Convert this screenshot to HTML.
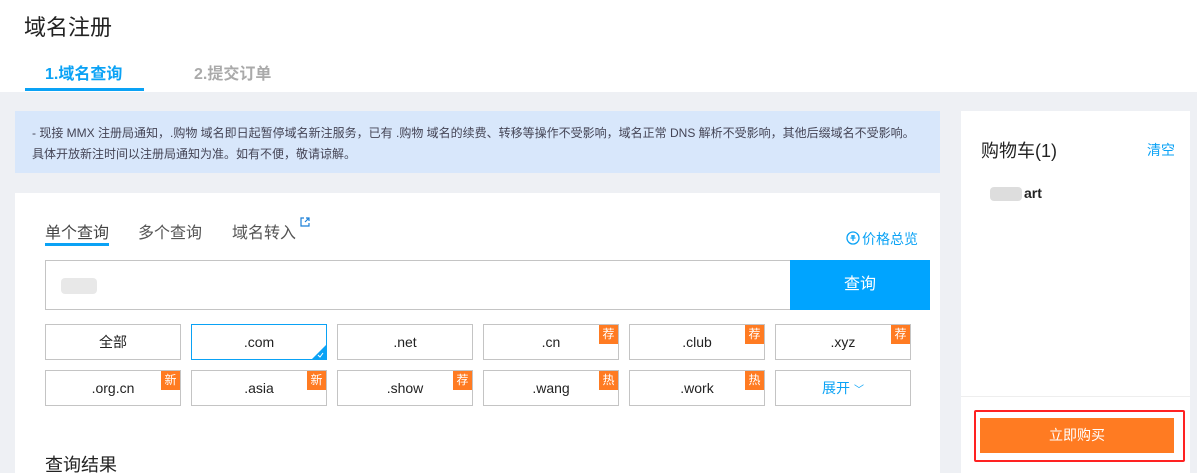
<!DOCTYPE html>
<html><head><meta charset="utf-8"><style>
*{margin:0;padding:0;box-sizing:border-box}
html,body{width:1197px;height:473px;overflow:hidden}
body{background:#eef0f4;font-family:"Liberation Sans","Noto Sans CJK SC",sans-serif;position:relative;color:#333}
.a{position:absolute}
.hd{left:0;top:0;width:1197px;height:92px;background:#fff}
.tag{position:absolute;right:0;top:0;width:19px;height:19px;background:#ff7b22;color:#fff;font-size:12px;line-height:19px;text-align:center}
.b{position:absolute;width:136px;height:36px;border:1px solid #c4c4c4;background:#fff;font-size:14px;line-height:34px;text-align:center;color:#222}
</style></head><body>
<div class="a hd"></div>
<div class="a" style="left:24px;top:10px;font-size:22px;color:#222">域名注册</div>
<div class="a" style="left:45px;top:60px;font-size:16px;font-weight:bold;color:#0aa2f5">1.域名查询</div>
<div class="a" style="left:25px;top:88px;width:119px;height:3px;background:#0aa2f5"></div>
<div class="a" style="left:194px;top:60px;font-size:16px;font-weight:bold;color:#aaa">2.提交订单</div>

<div class="a" style="left:15px;top:111px;width:925px;height:62px;background:#d8e7fb"></div>
<div class="a" style="left:32px;top:123px;font-size:12px;line-height:21px;color:#445;width:905px;white-space:nowrap">- 现接 MMX 注册局通知，.购物 域名即日起暂停域名新注服务，已有 .购物 域名的续费、转移等操作不受影响，域名正常 DNS 解析不受影响，其他后缀域名不受影响。<br>具体开放新注时间以注册局通知为准。如有不便，敬请谅解。</div>

<div class="a" style="left:15px;top:193px;width:925px;height:280px;background:#fff"></div>
<div class="a" style="left:45px;top:219px;font-size:16px;color:#444">单个查询</div>
<div class="a" style="left:45px;top:243px;width:64px;height:3px;background:#0aa2f5"></div>
<div class="a" style="left:138px;top:219px;font-size:16px;color:#555">多个查询</div>
<div class="a" style="left:232px;top:219px;font-size:16px;color:#555">域名转入</div>
<svg class="a" style="left:300px;top:217px" width="10" height="10" viewBox="0 0 10 10"><path d="M4 1H1v8h8V6M5 5l4-4M6 1h3v3" fill="none" stroke="#1a7fd8" stroke-width="1.2"/></svg>
<svg class="a" style="left:846px;top:231px" width="14" height="14" viewBox="0 0 14 14"><circle cx="7" cy="7" r="6" fill="none" stroke="#0aa2f5" stroke-width="1.3"/><path d="M4.5 7h5M7 4v6M5 5h4" fill="none" stroke="#0aa2f5" stroke-width="1.2"/></svg>
<div class="a" style="left:862px;top:229px;font-size:14px;color:#0aa2f5">价格总览</div>
<div class="a" style="left:45px;top:260px;width:746px;height:50px;border:1px solid #c4c4c4"></div>
<div class="a" style="left:61px;top:278px;width:36px;height:16px;background:#e8e8e8;border-radius:4px"></div>
<div class="a" style="left:790px;top:260px;width:140px;height:50px;background:#00a4ff;color:#fff;font-size:16px;line-height:50px;text-align:center">查询</div>

<div class="b" style="left:45px;top:324px">全部</div>
<div class="b" style="left:191px;top:324px;border-color:#0aa2f5">.com<svg style="position:absolute;right:0;bottom:0" width="14" height="14"><path d="M14 0V14H0Z" fill="#0aa2f5"/><path d="M6 10l2 2 3-4" fill="none" stroke="#fff" stroke-width="1"/></svg></div>
<div class="b" style="left:337px;top:324px">.net</div>
<div class="b" style="left:483px;top:324px">.cn<span class="tag">荐</span></div>
<div class="b" style="left:629px;top:324px">.club<span class="tag">荐</span></div>
<div class="b" style="left:775px;top:324px">.xyz<span class="tag">荐</span></div>
<div class="b" style="left:45px;top:370px">.org.cn<span class="tag">新</span></div>
<div class="b" style="left:191px;top:370px">.asia<span class="tag">新</span></div>
<div class="b" style="left:337px;top:370px">.show<span class="tag">荐</span></div>
<div class="b" style="left:483px;top:370px">.wang<span class="tag">热</span></div>
<div class="b" style="left:629px;top:370px">.work<span class="tag">热</span></div>
<div class="b" style="left:775px;top:370px;color:#0aa2f5">展开 <span style="font-size:10px">﹀</span></div>
<div class="a" style="left:45px;top:451px;font-size:18px;color:#222">查询结果</div>

<div class="a" style="left:961px;top:111px;width:229px;height:362px;background:#fff"></div>
<div class="a" style="left:961px;top:396px;width:229px;height:1px;background:#eee"></div>
<div class="a" style="left:981px;top:137px;font-size:18px;color:#222">购物车(1)</div>
<div class="a" style="left:1147px;top:140px;font-size:14px;color:#0aa2f5">清空</div>
<div class="a" style="left:990px;top:187px;width:32px;height:14px;background:#ddd;border-radius:4px"></div>
<div class="a" style="left:1024px;top:185px;font-size:14px;font-weight:bold;color:#222">art</div>
<div class="a" style="left:974px;top:410px;width:211px;height:52px;border:2px solid #f22;border-radius:2px"></div>
<div class="a" style="left:980px;top:418px;width:194px;height:35px;background:#ff7b22;color:#fff;font-size:14px;line-height:35px;text-align:center">立即购买</div>
</body></html>
